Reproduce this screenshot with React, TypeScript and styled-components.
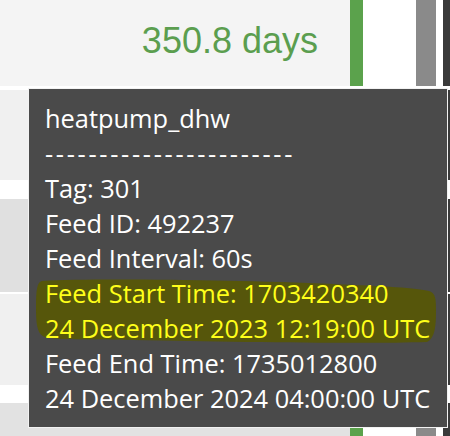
import React from "react";
import styled, { createGlobalStyle } from "styled-components";

const Global = createGlobalStyle`
  html, body { margin: 0; padding: 0; background: #ffffff; }
  body { width: 450px; height: 436px; overflow: hidden; }
`;

const Page = styled.div`
  position: relative;
  width: 450px;
  height: 436px;
  overflow: hidden;
`;

const Rows = styled.div`
  display: flex;
  flex-direction: column;
`;

const Row = styled.div<{ $h: number; $gap: number }>`
  display: grid;
  grid-template-columns: 350px 13px 53px 20px 7px 7px;
  height: ${(p) => p.$h}px;
  margin-bottom: ${(p) => p.$gap}px;
`;

const Cell = styled.div<{ $bg: string }>`
  background: ${(p) => p.$bg};
  display: flex;
  justify-content: flex-end;
  align-items: flex-start;
  padding: 20px 32px 0 0;
  box-sizing: border-box;
`;

const Bar = styled.div<{ $bg: string }>`
  background: ${(p) => p.$bg};
`;

const Value = styled.span`
  font-family: "Liberation Sans", Arial, sans-serif;
  font-size: 36px;
  color: #5b9e4f;
  line-height: 41px;
`;

const Tooltip = styled.div`
  position: absolute;
  left: 28px;
  top: 88px;
  width: 420px;
  box-sizing: border-box;
  background: #4a4a4a;
  border: 1px solid #f2f2f2;
  padding: 12px 8px 11px 16px;
  font-family: "Open Sans", "Noto Sans", sans-serif;
  font-size: 25.4px;
  line-height: 35px;
  color: #ffffff;
`;

const Highlight = styled.svg`
  position: absolute;
  left: 5px;
  top: 189px;
  width: 403px;
  height: 70px;
`;

const Line = styled.div<{ $hl?: boolean; $dash?: boolean }>`
  position: relative;
  white-space: nowrap;
  color: ${(p) => (p.$hl ? "#ffff1a" : "#ffffff")};
  letter-spacing: ${(p) => (p.$dash ? "2.7px" : "0")};
`;

const rows = [
  { h: 86, gap: 4, bg: "#f4f4f4", text: "350.8 days" },
  { h: 90, gap: 19, bg: "#f0f0f0" },
  { h: 93, gap: 2, bg: "#e0e0e0" },
  { h: 91, gap: 18, bg: "#f0f0f0" },
  { h: 60, gap: 0, bg: "#e2e2e2" },
];

const lines: { t: string; hl?: boolean; dash?: boolean }[] = [
  { t: "heatpump_dhw" },
  { t: "-----------------------", dash: true },
  { t: "Tag: 301" },
  { t: "Feed ID: 492237" },
  { t: "Feed Interval: 60s" },
  { t: "Feed Start Time: 1703420340", hl: true },
  { t: "24 December 2023 12:19:00 UTC", hl: true },
  { t: "Feed End Time: 1735012800" },
  { t: "24 December 2024 04:00:00 UTC" },
];

export default function App() {
  return (
    <Page>
      <Global />
      <Rows>
        {rows.map((r, i) => (
          <Row key={i} $h={r.h} $gap={r.gap}>
            <Cell $bg={r.bg}>{r.text && <Value>{r.text}</Value>}</Cell>
            <Bar $bg="#5ba24c" />
            <Bar $bg="#ffffff" />
            <Bar $bg="#8a8a8a" />
            <Bar $bg="#ffffff" />
            <Bar $bg="#3a3a3a" />
          </Row>
        ))}
      </Rows>
      <Tooltip>
        <Highlight viewBox="0 0 403 70">
          <path
            d="M8 3 C60 0 200 2 300 6 C350 8 383 10 395 13 C402 15 402 22 402 33 C402 48 401 60 393 64 C330 66 200 64 100 62 C60 61 30 62 14 60 C4 58 2 50 2 30 C2 12 3 4 8 3 Z"
            fill="#56560b"
          />
        </Highlight>
        {lines.map((l, i) => (
          <Line key={i} $hl={l.hl} $dash={l.dash}>
            {l.t}
          </Line>
        ))}
      </Tooltip>
    </Page>
  );
}
